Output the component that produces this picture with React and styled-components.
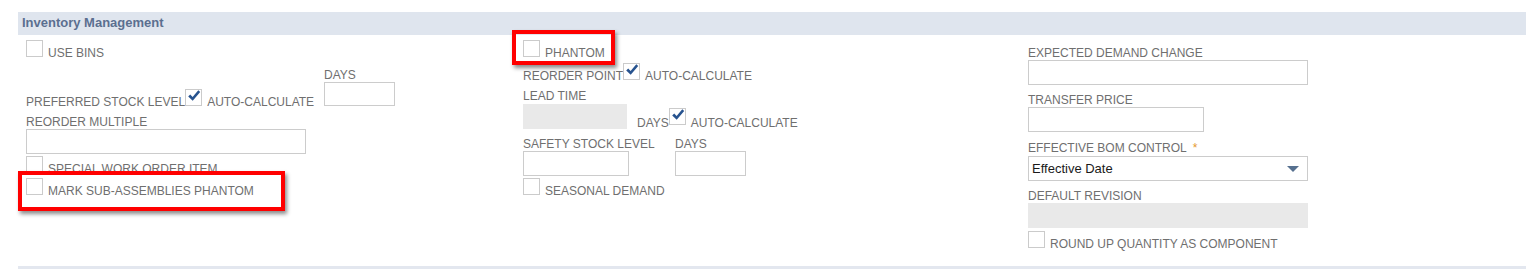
import React from "react";
import styled, { createGlobalStyle } from "styled-components";

const GlobalStyle = createGlobalStyle`
  html, body {
    margin: 0;
    padding: 0;
    background: #ffffff;
    font-family: "Liberation Sans", Arial, sans-serif;
    overflow: hidden;
  }
`;

const Section = styled.div`
  padding: 12px 0 0 18px;
`;

const SectionHeader = styled.div`
  height: 23px;
  line-height: 22px;
  padding-left: 4px;
  background: #dfe5ee;
  color: #5b6f90;
  font-size: 13px;
  font-weight: bold;
`;

const Columns = styled.div`
  display: grid;
  grid-template-columns: 497px 505px 280px;
  margin-top: 5px;
  padding-left: 8px;
`;

const Column = styled.div`
  display: flex;
  flex-direction: column;
  align-items: flex-start;
`;

const Field = styled.div`
  display: flex;
  flex-direction: column;
  width: ${({ $w }) => ($w ? `${$w}px` : "auto")};
  margin-top: ${({ $mt }) => $mt || 0}px;
  margin-bottom: ${({ $mb }) => $mb || 0}px;
`;

const Label = styled.div`
  font-size: 12px;
  line-height: 14px;
  color: #6f6f6f;
  text-transform: uppercase;
  white-space: nowrap;
`;

const Required = styled.span`
  color: #e59a2f;
  margin-left: 6px;
`;

const TextInput = styled.input`
  box-sizing: border-box;
  width: ${({ $w }) => $w}px;
  height: ${({ $h }) => $h || 25}px;
  margin: ${({ $mt }) => $mt || 0}px 0 ${({ $mb }) => $mb || 0}px 0;
  padding: 0 4px;
  border: 1px solid ${({ $disabled }) => ($disabled ? "#e9e9e9" : "#cccccc")};
  background: ${({ $disabled }) => ($disabled ? "#e9e9e9" : "#ffffff")};
  outline: none;
  font: 13px "Liberation Sans", Arial, sans-serif;
`;

const CheckRow = styled.div`
  position: relative;
  width: ${({ $w }) => ($w ? `${$w}px` : "auto")};
  margin-top: ${({ $mt }) => $mt || 0}px;
  font-size: 12px;
  line-height: 14px;
  color: #6f6f6f;
  text-transform: uppercase;
  white-space: nowrap;
`;

const InlineRow = styled.div`
  display: flex;
  align-items: flex-end;
  margin-top: ${({ $mt }) => $mt || 0}px;
  gap: ${({ $gap }) => $gap || 0}px;
`;

const BoxWrap = styled.span`
  position: relative;
  display: inline-block;
  box-sizing: border-box;
  width: 17px;
  height: 17px;
  margin-right: 5px;
  border: 1px solid #cbcbcb;
  background: #ffffff;
  vertical-align: ${({ $raise }) => $raise || 0}px;

  svg {
    position: absolute;
    left: 1px;
    top: -1px;
  }
`;

const Highlight = styled.span`
  position: absolute;
  left: ${({ $x }) => $x}px;
  top: ${({ $y }) => $y}px;
  width: ${({ $w }) => $w}px;
  height: ${({ $h }) => $h}px;
  box-sizing: border-box;
  border: 4px solid #ff0000;
  box-shadow: 2px 3px 4px rgba(0, 0, 0, 0.45);
  pointer-events: none;
  z-index: 2;
`;

const Select = styled.div`
  box-sizing: border-box;
  width: 280px;
  height: 25px;
  margin-top: 1px;
  display: flex;
  align-items: center;
  justify-content: space-between;
  padding: 0 8px 0 3px;
  border: 1px solid #cccccc;
  background: #ffffff;
  color: #1a1a1a;
  font-size: 13px;
`;

const BottomRule = styled.div`
  height: 3px;
  margin-top: 15px;
  background: #e3e7ef;
`;

const Checkbox = ({ checked, raise }) => (
  <BoxWrap $raise={raise}>
    {checked && (
      <svg width="14" height="14" viewBox="0 0 14 14">
        <path
          d="M1.2 7.4 L3.2 5.6 L5.6 8.1 L11.3 1.3 L13.2 3 L5.7 11.8 Z"
          fill="#27538f"
        />
      </svg>
    )}
  </BoxWrap>
);

const App = () => {
  return (
    <>
      <GlobalStyle />
      <Section>
        <SectionHeader>Inventory Management</SectionHeader>
        <Columns>
          <Column>
            <CheckRow>
              <Checkbox />
              Use Bins
            </CheckRow>
            <InlineRow $mt={8}>
              <CheckRow $w={298}>
                Preferred Stock Level
                <Checkbox checked />
                Auto-Calculate
              </CheckRow>
              <Field $mb={3}>
                <Label>Days</Label>
                <TextInput $w={71} $h={24} readOnly />
              </Field>
            </InlineRow>
            <Field $mt={6}>
              <Label>Reorder Multiple</Label>
              <TextInput $w={280} readOnly />
            </Field>
            <CheckRow $mt={2}>
              <Checkbox />
              Special Work Order Item
            </CheckRow>
            <CheckRow $mt={2}>
              <Checkbox />
              Mark Sub-Assemblies Phantom
              <Highlight $x={-8} $y={-7} $w={267} $h={40} />
            </CheckRow>
          </Column>

          <Column>
            <CheckRow>
              <Checkbox />
              Phantom
              <Highlight $x={-11} $y={-10} $w={103} $h={35} />
            </CheckRow>
            <CheckRow $mt={3}>
              Reorder Point
              <Checkbox checked />
              Auto-Calculate
            </CheckRow>
            <Field $mt={6}>
              <Label>Lead Time</Label>
            </Field>
            <InlineRow $mt={1} $gap={10}>
              <TextInput $w={104} $mb={1} $disabled readOnly />
              <CheckRow>
                Days
                <Checkbox checked raise={2} />
                Auto-Calculate
              </CheckRow>
            </InlineRow>
            <InlineRow $mt={7}>
              <Field $w={152}>
                <Label>Safety Stock Level</Label>
                <TextInput $w={106} readOnly />
              </Field>
              <Field>
                <Label>Days</Label>
                <TextInput $w={71} readOnly />
              </Field>
            </InlineRow>
            <CheckRow $mt={2}>
              <Checkbox />
              Seasonal Demand
            </CheckRow>
          </Column>

          <Column>
            <Field $mt={6}>
              <Label>Expected Demand Change</Label>
              <TextInput $w={280} readOnly />
            </Field>
            <Field $mt={8}>
              <Label>Transfer Price</Label>
              <TextInput $w={176} readOnly />
            </Field>
            <Field $mt={9}>
              <Label>
                Effective BOM Control<Required>*</Required>
              </Label>
              <Select>
                <span>Effective Date</span>
                <svg width="12" height="6" viewBox="0 0 12 6">
                  <path d="M0 0 H12 L6 6 Z" fill="#56708f" />
                </svg>
              </Select>
            </Field>
            <Field $mt={8}>
              <Label>Default Revision</Label>
              <TextInput $w={280} $disabled readOnly />
            </Field>
            <CheckRow $mt={3}>
              <Checkbox />
              Round Up Quantity as Component
            </CheckRow>
          </Column>
        </Columns>
        <BottomRule />
      </Section>
    </>
  );
};

export default App;
